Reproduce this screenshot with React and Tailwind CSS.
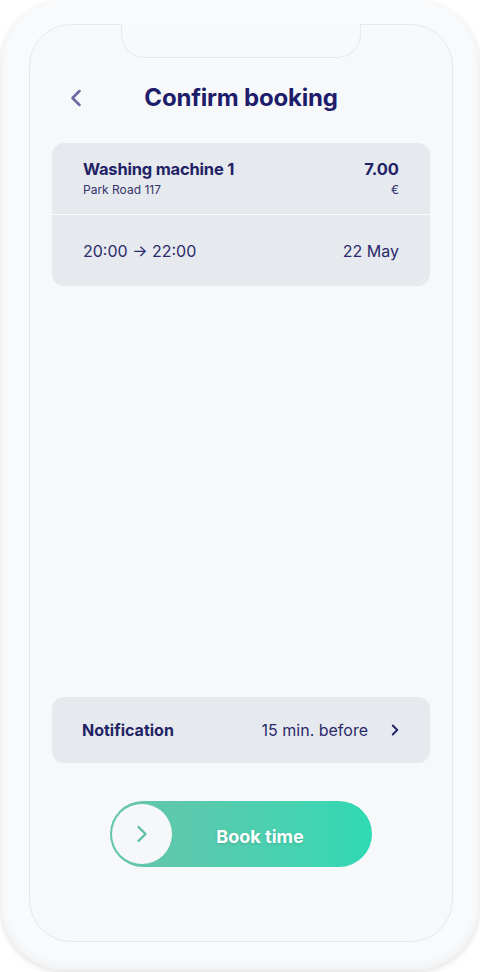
import { ChevronLeft, ChevronRight } from 'lucide-react'

export default function App() {
  return (
    <div className="w-[480px] h-[972px] bg-white pt-0 px-[1px]" style={{ fontFamily: 'Inter, "Noto Sans", sans-serif' }}>
      {/* phone body */}
      <div className="h-[970px] rounded-[64px] bg-[#f9fafb] shadow-[0_2px_6px_rgba(0,0,0,0.12),inset_0_-4px_10px_rgba(0,0,0,0.04)] pl-[28px] pr-[26px] pt-[24px] pb-[28px]">
        {/* screen */}
        <div className="relative h-full rounded-[42px] border border-[#e6e8ec] bg-[#f7f8f9] flex flex-col">
          {/* notch */}
          <div className="absolute -top-[1px] left-[91px] w-[240px] h-[34px] rounded-b-[24px] border border-t-0 border-[#e6e8ec] bg-[#f8f9fa]"></div>

          {/* header */}
          <div className="relative mt-[53px] h-[40px] flex items-center justify-center">
            <button className="absolute left-[32px] text-[#6a6aa6]">
              <ChevronLeft size={28} strokeWidth={2.2} />
            </button>
            <h1 className="text-[24px] font-bold text-[#1d1d6b] tracking-[-0.2px]">Confirm booking</h1>
          </div>

          {/* booking card */}
          <div className="mx-[22px] mt-[25px] rounded-[12px] bg-[#e6e9ed] text-[#222266]">
            <div className="h-[72px] px-[31px] flex justify-between items-start pt-[16px] border-b border-white/80">
              <div>
                <p className="text-[16.5px] font-bold leading-[20px] tracking-[-0.2px]">Washing machine 1</p>
                <p className="text-[12px] leading-[16px] mt-[3px] text-[#34346f]">Park Road 117</p>
              </div>
              <div className="text-right">
                <p className="text-[16.5px] font-bold leading-[20px]">7.00</p>
                <p className="text-[12px] leading-[16px] mt-[3px] text-[#34346f]">€</p>
              </div>
            </div>
            <div className="h-[71px] px-[31px] flex justify-between items-center text-[16px] text-[#2a2a6c]">
              <span>20:00 → 22:00</span>
              <span>22 May</span>
            </div>
          </div>

          {/* notification */}
          <div className="mt-auto mx-[22px] h-[66px] rounded-[12px] bg-[#e6e9ed] flex items-center justify-between pl-[30px] pr-[26px] text-[#222266]">
            <span className="text-[16px] font-bold">Notification</span>
            <div className="flex items-center gap-[18px]">
              <span className="text-[16px] text-[#2a2a6c]">15 min. before</span>
              <ChevronRight size={18} strokeWidth={2.5} />
            </div>
          </div>

          {/* book button */}
          <div className="mt-[38px] mb-[74px] flex justify-center">
            <button className="relative w-[262px] h-[66px] rounded-full bg-gradient-to-r from-[#66c3aa] to-[#2ed9b4] flex items-center p-[1px]">
              <span className="w-[62px] h-[62px] rounded-full bg-[#f5f7f8] border-[1.5px] border-[#5fc6aa] flex items-center justify-center text-[#5cbfa6]">
                <ChevronRight size={28} strokeWidth={2} />
              </span>
              <span className="flex-1 text-center pr-[24px] pt-[4px] text-[18px] font-bold text-white [text-shadow:0_1px_3px_rgba(0,0,0,0.15)]">Book time</span>
            </button>
          </div>
        </div>
      </div>
    </div>
  )
}
